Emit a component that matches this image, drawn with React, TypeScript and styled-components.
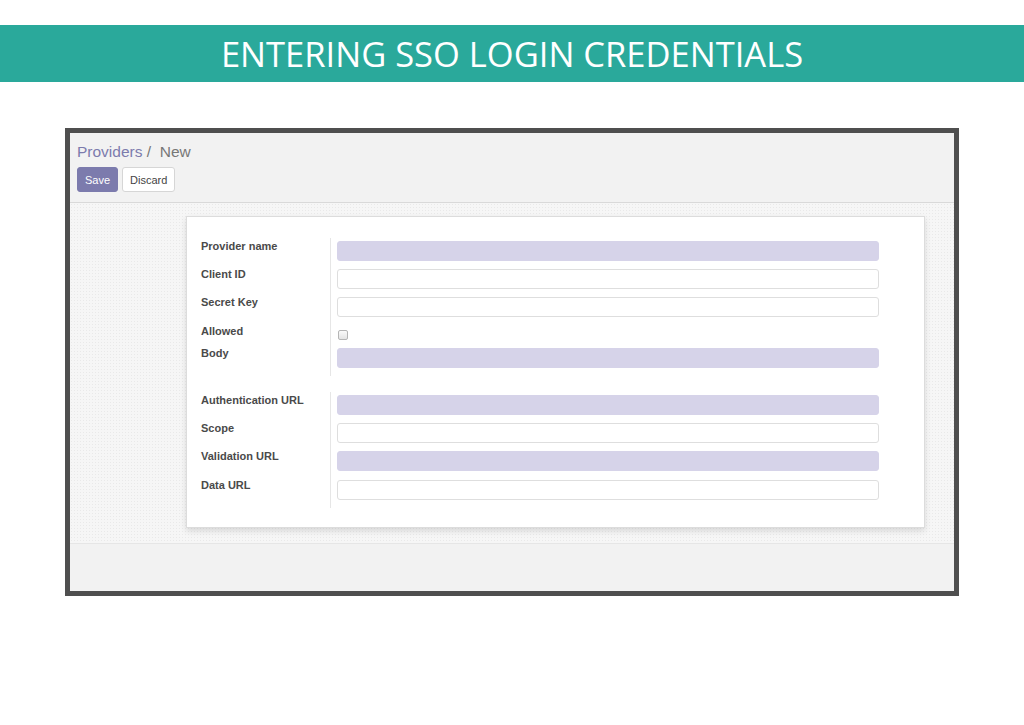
import styled, { createGlobalStyle } from "styled-components";

const GlobalStyle = createGlobalStyle`
  html, body {
    margin: 0;
    padding: 0;
    background: #fff;
  }
  body {
    font-family: "Liberation Sans", Arial, sans-serif;
  }
`;

const Page = styled.div`
  width: 1024px;
  height: 725px;
  padding-top: 25px;
  box-sizing: border-box;
  overflow: hidden;
`;

const Banner = styled.div`
  height: 57px;
  background: #2aa99b;
  display: flex;
  align-items: center;
  justify-content: center;
`;

const BannerTitle = styled.h1`
  margin: 0;
  font-family: "Open Sans", sans-serif;
  font-weight: 400;
  font-size: 34.5px;
  color: #fff;
`;

const Frame = styled.div`
  margin: 46px 0 0 65px;
  width: 894px;
  height: 468px;
  box-sizing: border-box;
  border: 5px solid #4f4f4f;
  background: #f2f2f2;
  display: flex;
  flex-direction: column;
`;

const ControlPanel = styled.div`
  height: 70px;
  box-sizing: border-box;
  padding: 9px 7px 0;
  background: #f2f2f2;
  border-bottom: 1px solid #d9d9d9;
`;

const Breadcrumb = styled.div`
  font-size: 15.5px;
  line-height: 19px;
  color: #777;
`;

const Crumb = styled.span`
  color: #7c7bad;
`;

const Buttons = styled.div`
  display: flex;
  gap: 4px;
  margin-top: 6px;
`;

const Button = styled.button<{ $primary?: boolean }>`
  height: 25px;
  padding: 0 7px;
  font-family: "Liberation Sans", Arial, sans-serif;
  font-size: 11px;
  border-radius: 3px;
  border: 1px solid ${(p) => (p.$primary ? "#7c7bad" : "#d6d6d6")};
  background: ${(p) => (p.$primary ? "#7c7bad" : "#fff")};
  color: ${(p) => (p.$primary ? "#fff" : "#444")};
`;

const Content = styled.div`
  height: 340px;
  box-sizing: border-box;
  padding: 13px 0 0 116px;
  background-color: #f6f6f6;
  background-image: radial-gradient(#e9e9e9 0.8px, transparent 0.9px);
  background-size: 3px 3px;
`;

const Sheet = styled.div`
  width: 739px;
  height: 312px;
  box-sizing: border-box;
  background: #fff;
  border: 1px solid #dcdcdc;
  box-shadow: 0 3px 6px rgba(0, 0, 0, 0.12);
  padding: 21px 45px 0 14px;
`;

const Group = styled.div`
  display: grid;
  grid-template-columns: 130px 1fr;
  margin-bottom: 16px;
`;

const Labels = styled.div`
  display: flex;
  flex-direction: column;
  border-right: 1px solid #e6e6e6;
  padding-bottom: 7px;
`;

const Fields = styled.div`
  display: flex;
  flex-direction: column;
  padding-left: 6px;
  padding-top: 3px;
`;

const Label = styled.div<{ $h: number }>`
  height: ${(p) => p.$h}px;
  font-size: 11px;
  font-weight: 700;
  color: #4a4a4a;
  line-height: 15px;
  padding-top: 1px;
  box-sizing: border-box;
`;

const Slot = styled.div<{ $h: number }>`
  height: ${(p) => p.$h}px;
`;

const Input = styled.div<{ $required?: boolean }>`
  height: 20px;
  box-sizing: border-box;
  border-radius: 3px;
  border: 1px solid ${(p) => (p.$required ? "#d6d3e9" : "#dedede")};
  background: ${(p) => (p.$required ? "#d6d3e9" : "#fff")};
`;

const Check = styled.div`
  width: 10px;
  height: 10px;
  margin: 4px 0 0 1px;
  box-sizing: border-box;
  border: 1px solid #b5b5b5;
  border-radius: 2px;
  background: linear-gradient(#fafafa, #e4e4e4);
`;

const Footer = styled.div`
  flex: 1;
  background: #f2f2f2;
  border-top: 1px solid #e6e6e6;
`;

type Row = { label: string; kind: "req" | "text" | "check"; h: number };

const groupOne: Row[] = [
  { label: "Provider name", kind: "req", h: 28 },
  { label: "Client ID", kind: "text", h: 28 },
  { label: "Secret Key", kind: "text", h: 29 },
  { label: "Allowed", kind: "check", h: 22 },
  { label: "Body", kind: "req", h: 24 },
];

const groupTwo: Row[] = [
  { label: "Authentication URL", kind: "req", h: 28 },
  { label: "Scope", kind: "text", h: 28 },
  { label: "Validation URL", kind: "req", h: 29 },
  { label: "Data URL", kind: "text", h: 24 },
];

function FieldGroup({ rows }: { rows: Row[] }) {
  return (
    <Group>
      <Labels>
        {rows.map((r) => (
          <Label key={r.label} $h={r.h}>
            {r.label}
          </Label>
        ))}
      </Labels>
      <Fields>
        {rows.map((r) => (
          <Slot key={r.label} $h={r.h}>
            {r.kind === "check" ? (
              <Check />
            ) : (
              <Input $required={r.kind === "req"} />
            )}
          </Slot>
        ))}
      </Fields>
    </Group>
  );
}

export default function App() {
  return (
    <>
      <GlobalStyle />
      <Page>
        <Banner>
          <BannerTitle>ENTERING SSO LOGIN CREDENTIALS</BannerTitle>
        </Banner>
        <Frame>
          <ControlPanel>
            <Breadcrumb>
              <Crumb>Providers</Crumb> /&nbsp; New
            </Breadcrumb>
            <Buttons>
              <Button $primary>Save</Button>
              <Button>Discard</Button>
            </Buttons>
          </ControlPanel>
          <Content>
            <Sheet>
              <FieldGroup rows={groupOne} />
              <FieldGroup rows={groupTwo} />
            </Sheet>
          </Content>
          <Footer />
        </Frame>
      </Page>
    </>
  );
}
